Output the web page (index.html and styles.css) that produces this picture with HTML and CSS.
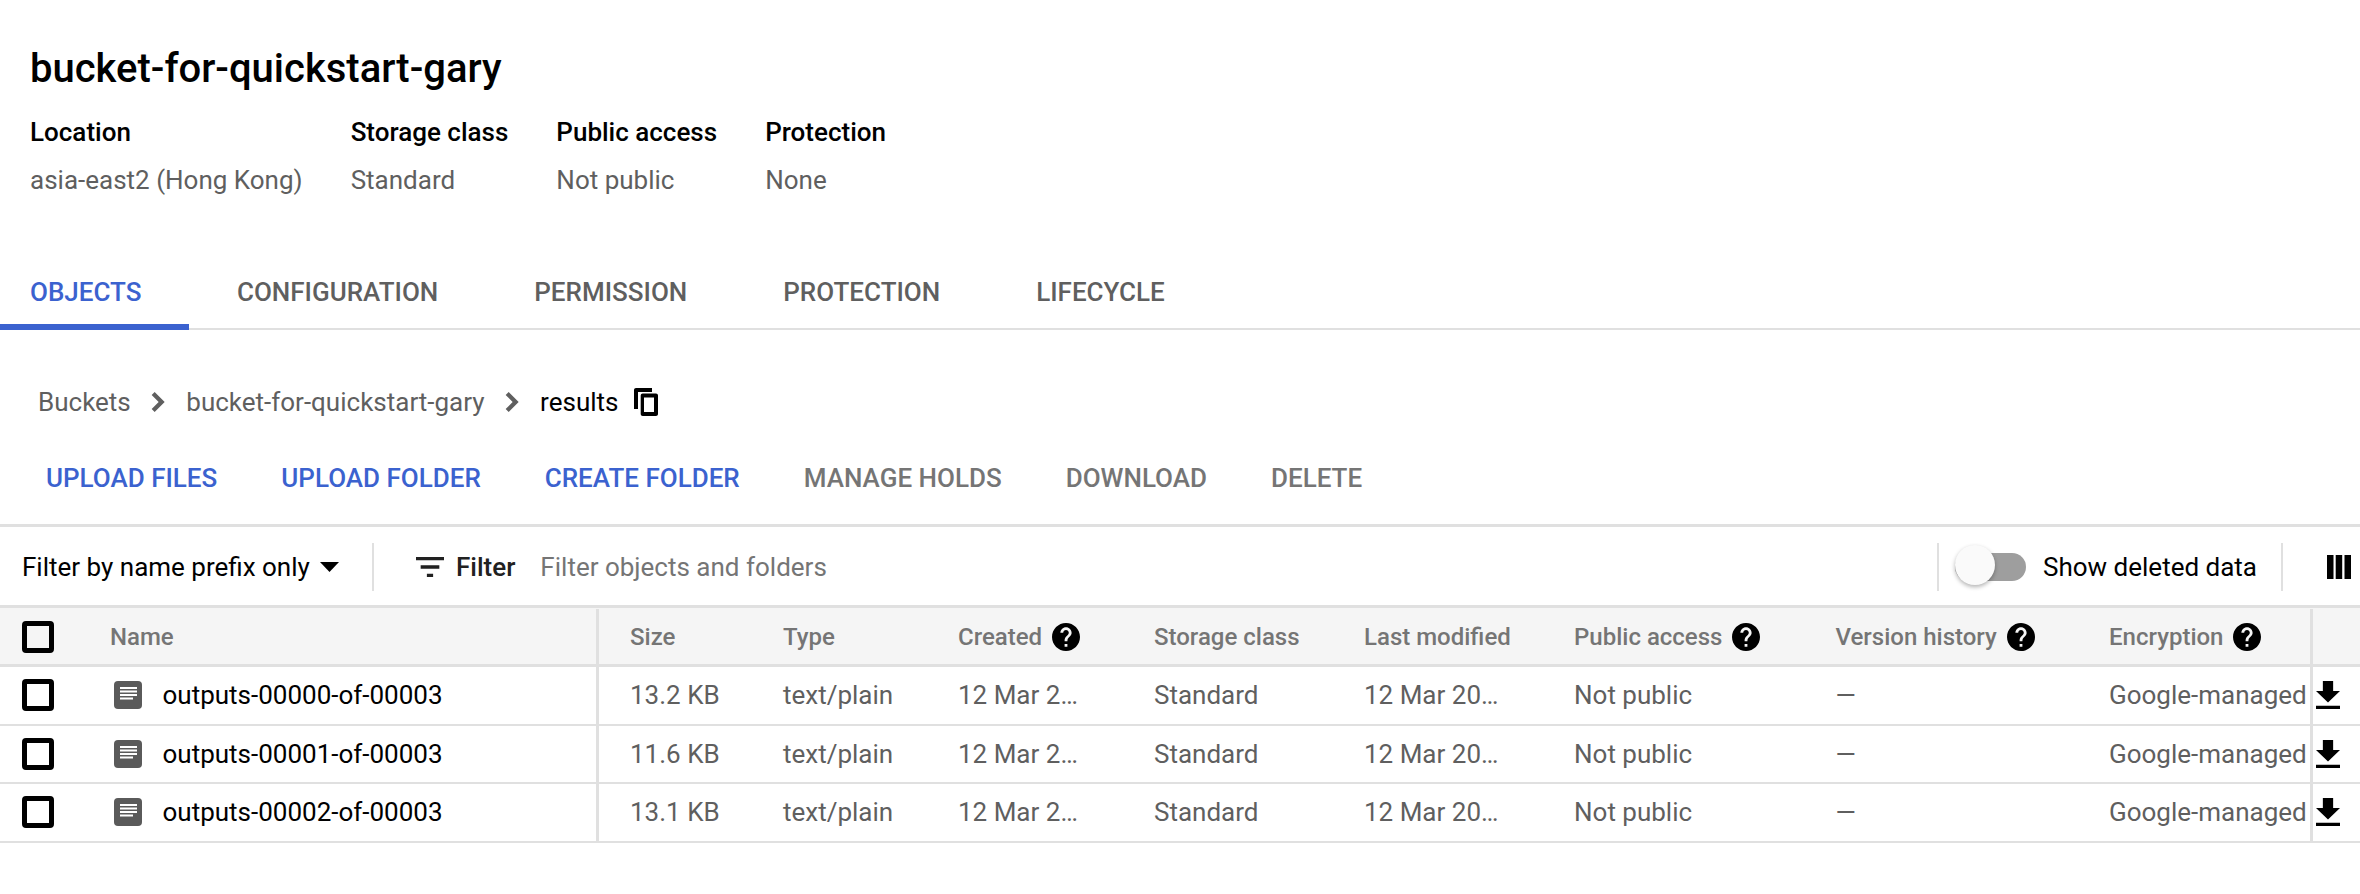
FILE: index.html
```html
<!DOCTYPE html>
<html lang="en">
<head>
<meta charset="utf-8">
<title>bucket-for-quickstart-gary</title>
<link rel="stylesheet" href="styles.css">
</head>
<body>
<svg class="sprite" aria-hidden="true">
  <symbol id="help" viewBox="2 2 20 20"><path d="M12 2C6.48 2 2 6.48 2 12s4.48 10 10 10 10-4.48 10-10S17.52 2 12 2zm1 17h-2v-2h2v2zm2.07-7.75l-.9.92C13.45 12.9 13 13.5 13 15h-2v-.5c0-1.1.45-2.1 1.17-2.83l1.24-1.26c.37-.36.59-.86.59-1.41 0-1.1-.9-2-2-2s-2 .9-2 2H8c0-2.21 1.79-4 4-4s4 1.79 4 4c0 .88-.36 1.68-.93 2.25z"/></symbol>
  <symbol id="get" viewBox="5 3 14 17" preserveAspectRatio="none"><path d="M19 9h-4V3H9v6H5l7 7 7-7zM5 18v2h14v-2H5z"/></symbol>
  <symbol id="chev" viewBox="8 6 8 12"><path d="M10 6L8.200 7.800 12.400 12l-4.200 4.200L10 18l6-6z"/></symbol>
  <symbol id="doc" viewBox="0 0 28 28"><rect width="28" height="28" rx="4" fill="#5a5a5a"/><path d="M6 6h17v2H6zM6 9.500h17v2H6zM6 13h17v2H6zM6 16.500h13v2H6z" fill="#fff"/></symbol>
</svg>

<header class="summary">
  <h1 class="title">bucket-for-quickstart-gary</h1>
  <dl class="meta">
    <div class="meta-item"><dt>Location</dt><dd>asia-east2 (Hong Kong)</dd></div>
    <div class="meta-item"><dt>Storage class</dt><dd>Standard</dd></div>
    <div class="meta-item"><dt>Public access</dt><dd>Not public</dd></div>
    <div class="meta-item"><dt>Protection</dt><dd>None</dd></div>
  </dl>
</header>

<nav class="tabs">
  <a class="tab active">OBJECTS</a>
  <a class="tab">CONFIGURATION</a>
  <a class="tab">PERMISSION</a>
  <a class="tab">PROTECTION</a>
  <a class="tab">LIFECYCLE</a>
</nav>

<div class="crumbs">
  <span>Buckets</span>
  <svg class="chev"><use href="#chev"/></svg>
  <span>bucket-for-quickstart-gary</span>
  <svg class="chev"><use href="#chev"/></svg>
  <span class="current">results</span>
  <svg class="copy" viewBox="0 0 24 28"><path d="M18 0H2C.9 0 0 .9 0 2v19h4V4h14z"/><path fill-rule="evenodd" d="M8.700 5.500h13.300c1.100 0 2 .9 2 2V26c0 1.100-.9 2-2 2H8.700c-1.100 0-2-.9-2-2V7.500c0-1.100.9-2 2-2zm1.300 4V24h10V9.500z"/></svg>
</div>

<div class="actions">
  <a class="action primary">UPLOAD FILES</a>
  <a class="action primary">UPLOAD FOLDER</a>
  <a class="action primary">CREATE FOLDER</a>
  <a class="action">MANAGE HOLDS</a>
  <a class="action">DOWNLOAD</a>
  <a class="action">DELETE</a>
</div>

<div class="toolbar">
  <div class="prefix">Filter by name prefix only<svg class="caret" viewBox="0 0 19 10"><path d="M0 0h19L9.500 10z"/></svg></div>
  <div class="filter">
    <svg class="filter-icon" viewBox="3 6 18 12" preserveAspectRatio="none"><path d="M10 18h4v-2h-4v2zM3 6v2h18V6H3zm3 7h12v-2H6v2z"/></svg>
    <span class="filter-label">Filter</span>
    <span class="placeholder">Filter objects and folders</span>
  </div>
  <div class="deleted">
    <span class="switch"><span class="thumb"></span></span>
    <span>Show deleted data</span>
  </div>
  <div class="columns">
    <svg class="columns-icon" viewBox="0 0 24 24"><path d="M0 0h6.500v24H0zM8.700 0h6.500v24H8.700zM17.500 0H24v24h-6.500z"/></svg>
  </div>
</div>

<div class="table">
  <div class="row head">
    <div class="cell c-check"><span class="box"></span></div>
    <div class="cell c-name">Name</div>
    <div class="cell c-size">Size</div>
    <div class="cell c-type">Type</div>
    <div class="cell c-created">Created<svg class="help"><use href="#help"/></svg></div>
    <div class="cell c-storage">Storage class</div>
    <div class="cell c-modified">Last modified</div>
    <div class="cell c-public">Public access<svg class="help"><use href="#help"/></svg></div>
    <div class="cell c-version">Version history<svg class="help"><use href="#help"/></svg></div>
    <div class="cell c-enc">Encryption<svg class="help"><use href="#help"/></svg></div>
    <div class="cell c-act"></div>
  </div>
  <div class="row">
    <div class="cell c-check"><span class="box"></span></div>
    <div class="cell c-name"><svg class="doc"><use href="#doc"/></svg><span class="file">outputs-00000-of-00003</span></div>
    <div class="cell c-size">13.2 KB</div>
    <div class="cell c-type">text/plain</div>
    <div class="cell c-created">12 Mar 2…</div>
    <div class="cell c-storage">Standard</div>
    <div class="cell c-modified">12 Mar 20…</div>
    <div class="cell c-public">Not public</div>
    <div class="cell c-version">—</div>
    <div class="cell c-enc">Google-managed</div>
    <div class="cell c-act"><svg class="get"><use href="#get"/></svg></div>
  </div>
  <div class="row">
    <div class="cell c-check"><span class="box"></span></div>
    <div class="cell c-name"><svg class="doc"><use href="#doc"/></svg><span class="file">outputs-00001-of-00003</span></div>
    <div class="cell c-size">11.6 KB</div>
    <div class="cell c-type">text/plain</div>
    <div class="cell c-created">12 Mar 2…</div>
    <div class="cell c-storage">Standard</div>
    <div class="cell c-modified">12 Mar 20…</div>
    <div class="cell c-public">Not public</div>
    <div class="cell c-version">—</div>
    <div class="cell c-enc">Google-managed</div>
    <div class="cell c-act"><svg class="get"><use href="#get"/></svg></div>
  </div>
  <div class="row">
    <div class="cell c-check"><span class="box"></span></div>
    <div class="cell c-name"><svg class="doc"><use href="#doc"/></svg><span class="file">outputs-00002-of-00003</span></div>
    <div class="cell c-size">13.1 KB</div>
    <div class="cell c-type">text/plain</div>
    <div class="cell c-created">12 Mar 2…</div>
    <div class="cell c-storage">Standard</div>
    <div class="cell c-modified">12 Mar 20…</div>
    <div class="cell c-public">Not public</div>
    <div class="cell c-version">—</div>
    <div class="cell c-enc">Google-managed</div>
    <div class="cell c-act"><svg class="get"><use href="#get"/></svg></div>
  </div>
</div>
</body>
</html>
```
FILE: styles.css
```css
* { box-sizing: border-box; }
html, body { margin: 0; padding: 0; }
body {
  width: 2360px;
  height: 894px;
  overflow: hidden;
  background: #fff;
  color: #000;
  font-family: Roboto, "Liberation Sans", sans-serif;
  font-size: 26px;
}
.sprite { display: none; }

.summary { padding: 47px 30px 0; height: 260px; }
.title { margin: 0; font-size: 40px; line-height: 44px; font-weight: 500; }
.meta { display: flex; gap: 48px; margin: 26px 0 0; }
.meta-item { display: flex; flex-direction: column; gap: 18px; }
.meta dt { font-weight: 500; line-height: 30px; }
.meta dd { margin: 0; line-height: 30px; color: #5f5f5f; }

.tabs { display: flex; height: 70px; border-bottom: 2px solid #e0e0e0; }
.tab {
  display: flex; align-items: center; padding: 0 48px;
  font-weight: 500; color: #5f5f5f; margin-bottom: -2px;
  border-bottom: 6px solid transparent;
}
.tab.active { padding: 0 47.500px 0 30px; color: #3b62cf; border-bottom-color: #3b62cf; }

.crumbs { display: flex; align-items: center; height: 52px; margin-top: 46px; padding-left: 38px; color: #5f5f5f; }
.chev { width: 14px; height: 20px; margin: 0 21.500px 0 20px; fill: #5f5f5f; }
.current { color: #000; }
.copy { width: 24px; height: 28px; margin-left: 16px; fill: #000; }

.actions { display: flex; gap: 64px; height: 79px; margin-top: 17px; padding: 0 0 13px 46px; align-items: center; font-weight: 500; color: #757575; }
.primary { color: #3b62cf; }

.toolbar { display: flex; align-items: center; height: 84px; padding: 1px 0 0 22px; border-top: 3px solid #e0e0e0; border-bottom: 3px solid #e0e0e0; }
.prefix { display: flex; align-items: center; width: 352px; height: 48px; border-right: 2px solid #e0e0e0; }
.caret { width: 19px; height: 10px; margin-left: 10px; fill: #000; }
.filter { display: flex; align-items: center; flex: 1; padding-left: 42px; height: 48px; }
.filter-icon { width: 28px; height: 20px; fill: #212121; }
.filter-label { margin-left: 12px; font-weight: 500; color: #212121; }
.placeholder { margin-left: 25px; color: #757575; }
.deleted { display: flex; align-items: center; gap: 17px; width: 344px; height: 48px; padding-left: 16px; border-left: 2px solid #e0e0e0; }
.switch { position: relative; display: block; width: 71px; height: 28px; border-radius: 14px; background: #9e9e9e; }
.thumb { position: absolute; left: 0; top: -8px; width: 40px; height: 40px; border-radius: 50%; background: #fafafa; box-shadow: 0 2px 4px rgba(0,0,0,.3); }
.columns { display: flex; align-items: center; width: 79px; height: 48px; padding-left: 44px; border-left: 2px solid #e0e0e0; }
.columns-icon { width: 24px; height: 24px; fill: #000; }

.row {
  display: grid;
  grid-template-columns: 110px 489px 184px 175px 196px 210px 210px 261.500px 273.500px 201px 1fr;
  height: 58.500px;
  border-bottom: 2px solid #e0e0e0;
  color: #5f5f5f;
}
.head { height: 59px; padding-top: 1px; background: #f5f5f5; border-bottom-width: 3px; color: #757575; font-weight: 500; font-size: 24px; }
.cell { display: flex; align-items: center; white-space: nowrap; }
.c-check { padding-left: 22px; }
.box { display: block; width: 32px; height: 32px; border: 5px solid #000; border-radius: 4px; }
.c-name { border-right: 3px solid #e0e0e0; }
.c-size { padding-left: 31px; }
.c-act { border-left: 3px solid #e0e0e0; padding-left: 3px; }
.help { width: 28px; height: 28px; margin-left: 10px; fill: #000; }
.doc { width: 28px; height: 28px; margin-left: 4px; }
.file { margin-left: 20.500px; color: #000; }
.get { width: 24px; height: 28px; fill: #000; }
```
